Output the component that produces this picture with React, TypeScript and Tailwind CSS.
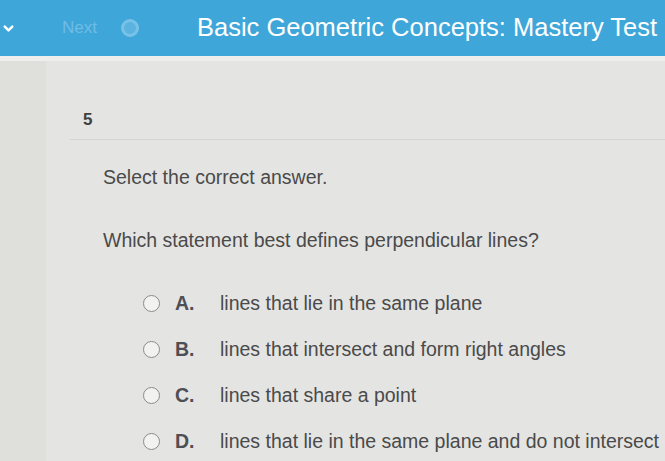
import { ChevronDown } from "lucide-react";

const options = [
  { letter: "A.", text: "lines that lie in the same plane" },
  { letter: "B.", text: "lines that intersect and form right angles" },
  { letter: "C.", text: "lines that share a point" },
  { letter: "D.", text: "lines that lie in the same plane and do not intersect" },
];

export default function App() {
  return (
    <div className="w-[665px] h-[461px] overflow-hidden bg-[#e4e4e2] font-['Liberation_Sans',Arial,sans-serif]">
      {/* top bar */}
      <div className="h-[56px] bg-[#3ea6d9] flex items-center">
        <ChevronDown className="ml-[1px] w-[15px] h-[15px] text-white" strokeWidth={4} />
        <span className="ml-[46px] text-[17px] text-[#6fbde5]">Next</span>
        <span className="ml-[24px] w-[18px] h-[18px] rounded-full border-[3px] border-[#79c2e7] bg-[#5cb3df]" />
        <h1 className="ml-[58px] text-[25.5px] leading-none text-white whitespace-nowrap">
          Basic Geometric Concepts: Mastery Test
        </h1>
      </div>
      <div className="h-[5px] bg-[#eeeeec]" />

      <div className="flex h-[400px]">
        <div className="w-[46px] bg-[#dfdfdc]" />
        <div className="flex-1">
          <div className="ml-[24px] border-b border-[#d5d5d3] pt-[46px] pb-[6px] pl-[13px]">
            <span className="text-[17px] font-bold text-[#3f3f3f]">5</span>
          </div>
          <div className="pl-[57px] text-[#4a4a4a] text-[19.5px]">
            <p className="mt-[23px]">Select the correct answer.</p>
            <p className="mt-[34px]">Which statement best defines perpendicular lines?</p>
            <div className="mt-[36px] pl-[37px] flex flex-col gap-[22px]">
              {options.map((o) => (
                <label key={o.letter} className="flex items-center leading-[24px]">
                  <span className="ml-[3px] w-[17px] h-[17px] rounded-full border border-[#8b8b8b] bg-[#f2f2f0]" />
                  <span className="ml-[15px] w-[45px] font-bold text-[#4e4e55]">{o.letter}</span>
                  <span className="text-[#4a4a4a] whitespace-nowrap">{o.text}</span>
                </label>
              ))}
            </div>
          </div>
        </div>
      </div>
    </div>
  );
}
